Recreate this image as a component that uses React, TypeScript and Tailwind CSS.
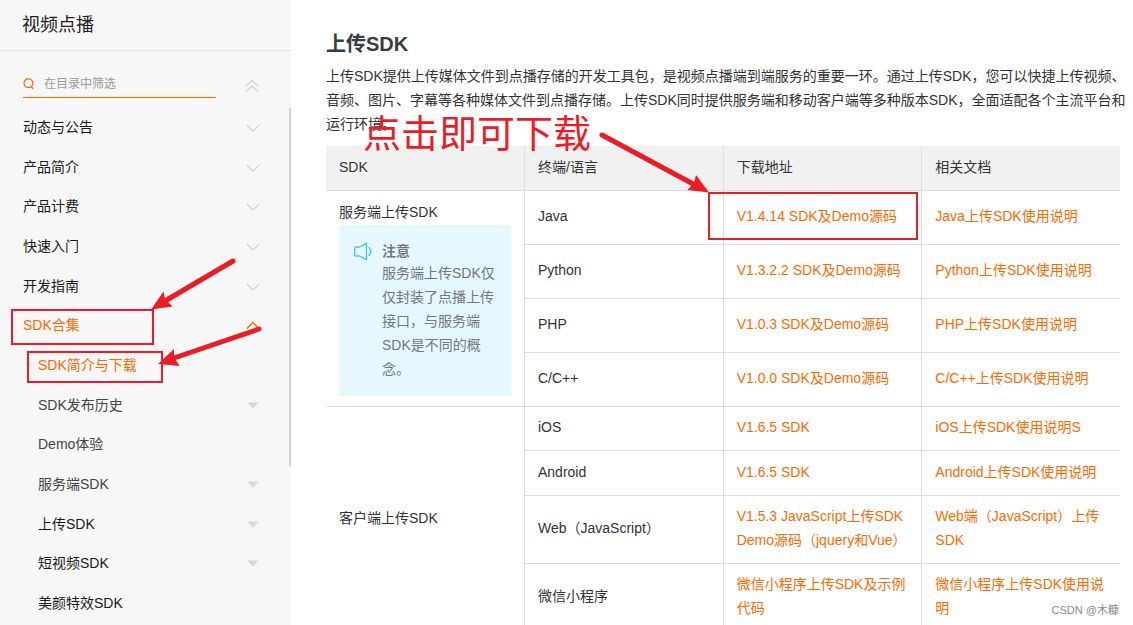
import React from "react";

type NavItem = { label: string; kind?: "chevron" | "caret" | "open"; sub?: boolean; active?: boolean; muted?: boolean };

const NAV: NavItem[] = [
  { label: "动态与公告", kind: "chevron" },
  { label: "产品简介", kind: "chevron" },
  { label: "产品计费", kind: "chevron" },
  { label: "快速入门", kind: "chevron" },
  { label: "开发指南", kind: "chevron" },
  { label: "SDK合集", kind: "open", active: true },
  { label: "SDK简介与下载", sub: true, active: true },
  { label: "SDK发布历史", kind: "caret", sub: true, muted: true },
  { label: "Demo体验", sub: true, muted: true },
  { label: "服务端SDK", kind: "caret", sub: true, muted: true },
  { label: "上传SDK", kind: "caret", sub: true },
  { label: "短视频SDK", kind: "caret", sub: true },
  { label: "美颜特效SDK", sub: true },
];

const SERVER = [
  ["Java", "V1.4.14 SDK及Demo源码", "Java上传SDK使用说明"],
  ["Python", "V1.3.2.2 SDK及Demo源码", "Python上传SDK使用说明"],
  ["PHP", "V1.0.3 SDK及Demo源码", "PHP上传SDK使用说明"],
  ["C/C++", "V1.0.0 SDK及Demo源码", "C/C++上传SDK使用说明"],
];

const CLIENT: [string, string[], string][] = [
  ["iOS", ["V1.6.5 SDK"], "iOS上传SDK使用说明S"],
  ["Android", ["V1.6.5 SDK"], "Android上传SDK使用说明"],
  ["Web（JavaScript）", ["V1.5.3 JavaScript上传SDK", "Demo源码（jquery和Vue）"], "Web端（JavaScript）上传SDK"],
  ["微信小程序", ["微信小程序上传SDK及示例代码"], "微信小程序上传SDK使用说明"],
];

const CELL = "border-b border-l border-[#dedede] px-[13px] pt-2 pb-[11px]";
const LINK = "block text-[#ff6a00] hover:underline";

function Marker({ kind }: { kind?: NavItem["kind"] }) {
  if (!kind) return null;
  if (kind === "caret")
    return (
      <svg className="h-4 w-4" viewBox="0 0 16 16" aria-hidden="true">
        <path d="M2.3 5.5h11.4L8 11.500z" fill="#d8d8d8" />
      </svg>
    );
  return (
    <svg className="h-4 w-4" viewBox="0 0 16 16" fill="none" strokeWidth="1.3" aria-hidden="true">
      {kind === "open" ? (
        <path d="M2 11.5 8 5.5l6 6" stroke="#ff6a00" />
      ) : (
        <path d="M1.800 6 8 12l6.200-6" stroke="#d3d3d3" />
      )}
    </svg>
  );
}

function Sidebar() {
  return (
    <aside className="flex w-[291px] shrink-0 flex-col bg-[#f7f7f7]">
      <h1 className="border-b border-[#e1e1e1] px-[22px] pt-3 pb-3 text-lg leading-[26px] text-[#222]">视频点播</h1>
      <div className="flex items-center justify-between pt-[19px] pr-[31px] pl-[23px]">
        <div className="flex h-7 w-[193px] items-center gap-[9px] border-b border-[#ff6a00]">
          <svg className="h-3 w-3 shrink-0" viewBox="0 0 12 12" fill="none" stroke="#ff6a00" strokeWidth="1.2" aria-hidden="true">
            <circle cx="5.4" cy="5.2" r="4.4" />
            <path d="m7.6 8 2.8 3" />
          </svg>
          <input
            aria-label="在目录中筛选"
            placeholder="在目录中筛选"
            className="w-full bg-transparent text-xs outline-none placeholder:text-[#999]"
          />
        </div>
        <button aria-label="收起目录" className="mt-1">
          <svg className="h-4 w-4" viewBox="0 0 16 16" fill="none" stroke="#d3d3d3" strokeWidth="1.3" aria-hidden="true">
            <path d="M2 8 8 2.5 14 8M2 13.5 8 8l6 5.5" />
          </svg>
        </button>
      </div>
      <nav className="mt-[9px] flex min-h-0 flex-1 pb-0.5">
        <ul className="flex flex-1 flex-col">
          {NAV.map((item) => (
            <li key={item.label} className="flex min-h-0 flex-1 items-center">
              <a
                href="#"
                className={`flex flex-1 items-center justify-between pr-[28px] ${item.sub ? "pl-[38px]" : "pl-[23px]"} ${
                  item.active ? "text-[#ff6a00]" : item.muted ? "text-[#444]" : "text-[#1a1a1a]"
                }`}
              >
                {item.label}
                <Marker kind={item.kind} />
              </a>
            </li>
          ))}
        </ul>
        <div className="mt-px h-[358px] w-0.5 bg-[#d3d3d3]" />
      </nav>
    </aside>
  );
}

function Note() {
  return (
    <div className="mt-px flex gap-[10px] bg-[#e5f8ff] pt-4 pr-[14px] pb-[15px] pl-[14px] text-[#73777a]">
      <svg className="h-5 w-[19px] shrink-0" viewBox="0 0 19 20" fill="none" stroke="#4cc3f0" strokeWidth="1.4" aria-hidden="true">
        <path
          d="M3 6h3.500L13.500 2.400v16.200L6.500 15H3c-.8 0-1.300-.5-1.300-1.300V7.300C1.700 6.500 2.200 6 3 6zM15.500 6.300c3 2.200 3 6.200 0 8.400"
          strokeLinejoin="round"
        />
      </svg>
      <div>
        <strong className="block leading-5">注意</strong>
        <p>服务端上传SDK仅仅封装了点播上传接口，与服务端SDK是不同的概念。</p>
      </div>
    </div>
  );
}

function SdkTable() {
  return (
    <table className="mt-[10px] w-full table-fixed border-separate border-spacing-0 text-left">
      <thead>
        <tr className="h-[45px] bg-[#f1f1f1]">
          {["SDK", "终端/语言", "下载地址", "相关文档"].map((h) => (
            <th
              key={h}
              className="border-b border-l border-[#dedede] px-[13px] pb-0.5 font-normal first:w-[198px] first:border-l-0"
            >
              {h}
            </th>
          ))}
        </tr>
      </thead>
      <tbody>
        {SERVER.map(([name, download, doc], i) => (
          <tr key={name} className="h-[54px]">
            {i === 0 && (
              <td rowSpan={4} className="border-b border-[#dedede] px-[13px] py-[9px] align-top">
                服务端上传SDK
                <Note />
              </td>
            )}
            <td className={CELL}>{name}</td>
            <td className={CELL}>
              <a href="#" className={LINK}>{download}</a>
            </td>
            <td className={CELL}>
              <a href="#" className={LINK}>{doc}</a>
            </td>
          </tr>
        ))}
        {CLIENT.map(([name, downloads, doc], i) => (
          <tr key={name} className={i === 1 ? "h-[45px]" : "h-11"}>
            {i === 0 && (
              <td rowSpan={4} className="border-b border-[#dedede] px-[13px] pb-0.5">
                客户端上传SDK
              </td>
            )}
            <td className={CELL}>{name}</td>
            <td className={CELL}>
              {downloads.map((d) => (
                <a key={d} href="#" className={LINK}>{d}</a>
              ))}
            </td>
            <td className={CELL}>
              <a href="#" className={LINK}>{doc}</a>
            </td>
          </tr>
        ))}
      </tbody>
    </table>
  );
}

function Annotations() {
  return (
    <div className="pointer-events-none absolute inset-0">
      <svg className="absolute top-0 left-0 h-[625px] w-[1133px]" viewBox="0 0 1133 625" fill="none" stroke="#ed1c24" aria-hidden="true">
        <g strokeWidth="2">
          <rect x="12" y="310" width="141" height="34" />
          <rect x="28" y="352" width="134" height="30" />
          <rect x="709" y="193" width="208" height="46" />
        </g>
        <g strokeWidth="5" strokeLinecap="round">
          <path d="M233 261 165 301" />
          <path d="M259 329 174 358" />
          <path d="M602 135 695 185" />
        </g>
        <g fill="#ed1c24" stroke="none">
          <path d="M151 309.500 163.500 291.500 165 299 172.500 306.500z" />
          <path d="M158 364 174 349 174 357 179.500 366z" />
          <path d="M709 192.500 696 175 694 183 687.500 190z" />
        </g>
      </svg>
      <span className="absolute top-[108px] left-[363px] text-[38px] leading-[52px] whitespace-nowrap text-[#ed1c24]">点击即可下载</span>
      <span className="absolute right-[14px] bottom-[6px] text-[11px] leading-[18px] text-[#8c8c8c]">CSDN @木糠</span>
    </div>
  );
}

export default function App() {
  return (
    <div className="relative flex h-screen overflow-hidden bg-white font-['Liberation_Sans','Noto_Sans_CJK_SC',sans-serif] text-sm leading-6 text-[#333]">
      <Sidebar />
      <main className="min-w-0 flex-1 pt-7 pl-[35px]">
        <h2 className="text-xl leading-8 font-bold text-[#373d41]">上传SDK</h2>
        <p className="mt-1">
          上传SDK提供上传媒体文件到点播存储的开发工具包，是视频点播端到端服务的重要一环。通过上传SDK，您可以快捷上传视频、音频、图片、字幕等各种媒体文件到点播存储。上传SDK同时提供服务端和移动客户端等多种版本SDK，全面适配各个主流平台和运行环境。
        </p>
        <div className="pr-[13px]">
          <SdkTable />
        </div>
      </main>
      <Annotations />
    </div>
  );
}
